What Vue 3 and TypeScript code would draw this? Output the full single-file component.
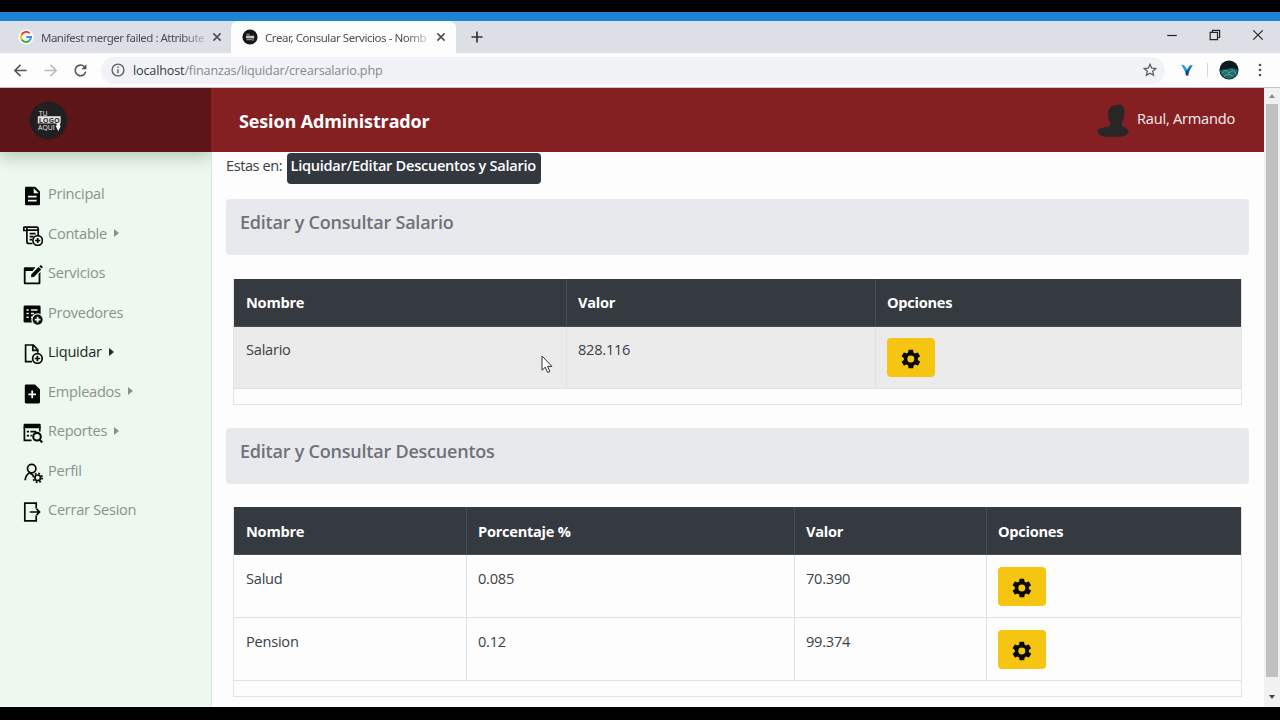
<script setup lang="ts">
interface NavItem {
  label: string
  icon: string
  arrow?: boolean
  active?: boolean
}

interface DataTable {
  title: string
  kind: string
  columns: string[]
  rows: string[][]
  hovered?: boolean
}

const navItems: NavItem[] = [
  { label: 'Principal', icon: 'document' },
  { label: 'Contable', icon: 'scroll', arrow: true },
  { label: 'Servicios', icon: 'edit' },
  { label: 'Provedores', icon: 'list' },
  { label: 'Liquidar', icon: 'fileadd', arrow: true, active: true },
  { label: 'Empleados', icon: 'fileplus', arrow: true },
  { label: 'Reportes', icon: 'report', arrow: true },
  { label: 'Perfil', icon: 'profile' },
  { label: 'Cerrar Sesion', icon: 'exit' },
]

const tables: DataTable[] = [
  {
    title: 'Editar y Consultar Salario',
    kind: 'salary',
    columns: ['Nombre', 'Valor', 'Opciones'],
    rows: [['Salario', '828.116']],
    hovered: true,
  },
  {
    title: 'Editar y Consultar Descuentos',
    kind: 'discounts',
    columns: ['Nombre', 'Porcentaje %', 'Valor', 'Opciones'],
    rows: [
      ['Salud', '0.085', '70.390'],
      ['Pension', '0.12', '99.374'],
    ],
  },
]
</script>

<template>
  <div class="screen">
    <div class="desktop-strip"></div>

    <div class="tabs">
      <div class="tab tab-idle">
        <svg class="favicon" viewBox="0 0 16 16">
          <circle cx="8" cy="8" r="7.6" fill="#fff" />
          <g fill="none" stroke-width="2">
            <path d="M3.6 5.7A5 5 0 0 1 11.7 4.4" stroke="#ea4335" />
            <path d="M3.6 5.7A5 5 0 0 0 3.7 10.5" stroke="#fbbc05" />
            <path d="M3.7 10.5A5 5 0 0 0 11.3 11.7" stroke="#34a853" />
            <path d="M8.2 8H13A5 5 0 0 1 11.3 11.7" stroke="#4285f4" />
          </g>
        </svg>
        <span class="tab-label">Manifest merger failed : Attribute</span>
        <svg class="tab-close" viewBox="0 0 10 10"><path d="M1.4 1.4 8.6 8.6M8.6 1.4 1.4 8.6" /></svg>
      </div>
      <div class="tab tab-current">
        <svg class="favicon" viewBox="0 0 16 16">
          <circle cx="8" cy="8" r="7.6" fill="#151515" />
          <path d="M4.5 5.3h3M4.5 10.6h5.5" stroke="#8a8a8a" stroke-width="1.3" />
          <path d="M4 8h8.2" stroke="#c4c4c4" stroke-width="2.6" />
          <path d="M11 9v3" stroke="#999" stroke-width="1" />
        </svg>
        <span class="tab-label">Crear, Consular Servicios - Nomb</span>
        <svg class="tab-close" viewBox="0 0 10 10"><path d="M1.4 1.4 8.6 8.6M8.6 1.4 1.4 8.6" /></svg>
      </div>
      <svg class="new-tab" viewBox="0 0 12 12"><path d="M6 .5v11M.5 6h11" /></svg>
      <div class="window-buttons">
        <svg viewBox="0 0 12 12"><path d="M1.2 6.5h9.6" /></svg>
        <svg viewBox="0 0 12 12"><path d="M1.2 3.3h7.3v7.3H1.2zM3.4 3.2V1.3h7.2v7.2H8.8" /></svg>
        <svg viewBox="0 0 12 12"><path d="M1.3 1.3l9.4 9.4M10.7 1.3l-9.4 9.4" /></svg>
      </div>
    </div>

    <div class="toolbar">
      <svg class="tool back" viewBox="0 0 16 16"><path d="M14.5 8H2.2M8 2 2 8l6 6" /></svg>
      <svg class="tool forward" viewBox="0 0 16 16"><path d="M1.5 8h12.3M8 2l6 6-6 6" /></svg>
      <svg class="tool reload" viewBox="0 0 16 16">
        <path d="M13.6 9.2A5.7 5.7 0 1 1 12.2 4" />
        <path d="M14.3 1.3v5.4H8.9z" fill="#505357" stroke="none" />
      </svg>
      <div class="address">
        <svg class="info" viewBox="0 0 14 14">
          <circle cx="7" cy="7" r="5.9" />
          <path d="M7 6.2v4M7 3.6v1.5" />
        </svg>
        <span class="url"><span class="host">localhost</span>/finanzas/liquidar/crearsalario.php</span>
        <svg class="star" viewBox="0 0 14 14">
          <path d="M7 1.3l1.7 3.8 4.1.4-3.1 2.7.9 4.1L7 10.2l-3.6 2.1.9-4.1L1.2 5.5l4.1-.4z" />
        </svg>
      </div>
      <svg class="extension" viewBox="0 0 14 14">
        <path d="M1.2 1.8Q4 1.5 5.2 3.5L7 6.3 8.800 3.5Q10 1.5 12.8 2.2L9.200 8.500 8.500 12.500H5.700L5 8.500z" fill="#2a9bdc" />
        <path d="M5.800 7 7 8 11.500 3 8.800 8.300 8 12.500H6.200z" fill="#173f7c" />
      </svg>
      <span class="divider"></span>
      <svg class="avatar" viewBox="0 0 20 20">
        <circle cx="10" cy="10" r="9.6" fill="#0b1c20" />
        <path d="M1 11c4-3 5 0 8-2s5-1 10 1c0 3-2 6-4 7-4 3-9 2-12-2z" fill="#1d6a6c" />
        <path d="M3 13l4-3 3 3 4-3 3 4M5 16l4-2 5 2" fill="none" stroke="#66a8a6" stroke-width=".9" />
      </svg>
      <svg class="dots" viewBox="0 0 4 14">
        <circle cx="2" cy="2" r="1.3" /><circle cx="2" cy="7" r="1.3" /><circle cx="2" cy="12" r="1.3" />
      </svg>
    </div>

    <div class="page">
      <aside class="sidebar">
        <div class="brand">
          <svg class="logo" viewBox="0 0 40 40">
            <circle cx="20" cy="20" r="19.5" fill="#221f20" />
            <rect x="9" y="15.6" width="23.5" height="7.4" fill="#e4e4e4" />
            <text x="10" y="15" class="logo-light" textLength="9" lengthAdjust="spacingAndGlyphs">TU</text>
            <text x="10" y="22.2" class="logo-dark" textLength="21.5" lengthAdjust="spacingAndGlyphs">LOGO</text>
            <text x="9.3" y="30.2" class="logo-light" textLength="17" lengthAdjust="spacingAndGlyphs">AQUI</text>
            <path d="M28.3 22.5h3.4v3h1L30 31l-2.7-5.5h1z" fill="#f3f3f3" />
          </svg>
        </div>
        <nav class="menu">
          <a v-for="item in navItems" :key="item.label" class="menu-item" :class="{ active: item.active }">
            <svg class="menu-icon" viewBox="0 0 20 20">
              <g v-if="item.icon === 'document'">
                <path d="M3 .8h9.2L17 5.6V18a1.3 1.3 0 0 1-1.3 1.3H3.3A1.3 1.3 0 0 1 2 18V2A1.2 1.2 0 0 1 3 .8z" />
                <path d="M10.7 2.3v5h5z" fill="#edf8ee" />
                <path d="M5 10.7h8.6M5 14.7h8.6" stroke="#edf8ee" stroke-width="1.7" />
              </g>
              <g v-else-if="item.icon === 'scroll'">
                <path class="line" d="M3.7 4.5H.8V1.8Q.8 1.1 1.6 1.1H14q1.3.2 1.2 1.8V9M3.9 1.5V15.5q0 2 2 2h3.5M3.8 4.2H15M6.6 7.6h6M6.6 10.7h4M6.6 13.7h2.4" />
                <circle class="line" cx="14.7" cy="14.5" r="4.8" />
                <path class="line" d="M14.7 11.9v5.2M12.1 14.5h5.2" />
              </g>
              <g v-else-if="item.icon === 'edit'">
                <path d="M2 2.3h10.5L9.5 6H2.600v11.500h13V9l1.800-1.900V18a1.200 1.200 0 0 1-1.200 1.200H2A1.200 1.200 0 0 1 .8 18V3.500A1.200 1.200 0 0 1 2 2.300z" />
                <path d="M8.300 9.300 15.600 2l2.600 2.600-7.300 7.300-2.800.4zM16.400 1.300l1-1q.5-.3 1 .2l1.100 1.100q.4.500 0 1l-1 1z" />
              </g>
              <g v-else-if="item.icon === 'list'">
                <rect x=".6" y=".6" width="17" height="17" rx="1.4" />
                <path d="M3.5 5H5.7M3.5 8.6H5.7M3.5 12.2H5.7M8 5h6.5M8 8.6h3M8 12.2h1" stroke="#edf8ee" stroke-width="1.5" />
                <circle cx="14.6" cy="14.6" r="5.7" stroke="#edf8ee" stroke-width="1.3" />
                <path d="M14.6 11.7v5.800M11.700 14.600h5.800" stroke="#edf8ee" stroke-width="1.8" />
              </g>
              <g v-else-if="item.icon === 'fileadd'">
                <path class="line" d="M9 17.7H2.6V1h7.8l4.4 4.9v2.8M9.8 1.4v5h5" />
                <circle class="line" cx="14.4" cy="14.5" r="4.8" />
                <path class="line" d="M14.4 11.8v5.4M11.7 14.5h5.4" />
              </g>
              <g v-else-if="item.icon === 'fileplus'">
                <path d="M3.4.6H12L17 5.4V18a1.4 1.4 0 0 1-1.4 1.4H3.2A1.4 1.4 0 0 1 1.8 18V2A1.4 1.4 0 0 1 3.4.6z" />
                <path d="M9.2 6.6v7.6M5.4 10.4H13" stroke="#edf8ee" stroke-width="1.8" />
              </g>
              <g v-else-if="item.icon === 'report'">
                <path d="M1.5.8h15.2a1 1 0 0 1 1 1V5.2H.6V1.8a1 1 0 0 1 .9-1z" />
                <path class="line" d="M1.4 4v13.4h7.2M16.8 4v4.5M3.8 8.6h2.2M7.4 8.6h5.8M3.8 12.6h2.2M7.4 12.6h1.4" />
                <circle class="line thick" cx="14" cy="13.7" r="3.8" />
                <path class="line thick" d="M16.6 16.6l2.6 2.9" />
              </g>
              <g v-else-if="item.icon === 'profile'">
                <circle class="line" cx="8.7" cy="5.6" r="4.2" />
                <path class="line" d="M2.2 17.3c0-4 1.700-5.600 4.300-7.600l4.200 2.900" />
                <circle class="line" cx="14.7" cy="14.8" r="2.8" />
                <circle class="line" cx="14.7" cy="14.8" r="4.5" stroke-dasharray="1.77 1.77" />
              </g>
              <g v-else>
                <path class="line" d="M13.2 6.5V1.2H1.8v17.6h11.4v-5.2" />
                <path class="line" d="M6.8 10h9.5M13.5 6.9l3 3.1-3 3.1" />
              </g>
            </svg>
            <span class="menu-label">{{ item.label }}</span>
            <span v-if="item.arrow" class="caret"></span>
          </a>
        </nav>
      </aside>

      <main class="main">
        <header class="topbar">
          <h1>Sesion Administrador</h1>
          <div class="user">
            <svg class="user-icon" viewBox="0 0 32 34">
              <path d="M12 5.5C13 2.5 16 .9 19 1.2L24.5.5 26.4 2.5 27 5c.8 2 .6 4 .2 6.5.2 2.7-1.6 4.5-2 6.5l-.4 3.4c1.8 1.8 6.6 2.8 7 6.4-.7 2.5-5 5-9.8 5H9.5C4 32.8.5 29 .2 27c.3-3 5.5-3 10.5-4.5 2.3-.7 3-1.5 2.8-3.5-2-3-2.5-5-2.3-7.5-.4-2.5 0-4 .8-6z" />
            </svg>
            <span>Raul, Armando</span>
          </div>
        </header>

        <div class="content">
          <div class="crumbs">
            <span class="crumb-lead">Estas en:</span>
            <span class="crumb">Liquidar/Editar Descuentos y Salario</span>
          </div>

          <section v-for="table in tables" :key="table.kind" class="block">
            <h2>{{ table.title }}</h2>
            <div class="table-frame" :class="table.kind">
              <div class="row head">
                <div v-for="column in table.columns" :key="column" class="cell">{{ column }}</div>
              </div>
              <div v-for="row in table.rows" :key="row[0]" class="row" :class="{ hovered: table.hovered }">
                <div v-for="value in row" :key="value" class="cell">{{ value }}</div>
                <div class="cell">
                  <button class="gear-button">
                    <svg viewBox="0 0 24 24">
                      <path fill-rule="evenodd" d="M19.4 13a7.5 7.5 0 0 0 0-2l2.2-1.7a.5.5 0 0 0 .1-.6l-2.1-3.6a.5.5 0 0 0-.6-.2l-2.6 1a7.7 7.7 0 0 0-1.7-1l-.4-2.7a.5.5 0 0 0-.5-.4H9.8a.5.5 0 0 0-.5.4l-.4 2.7a8 8 0 0 0-1.7 1l-2.6-1a.5.5 0 0 0-.6.2L1.9 8.7a.5.5 0 0 0 .1.6L4.2 11a8 8 0 0 0 0 2L2 14.7a.5.5 0 0 0-.1.6l2.1 3.6c.1.2.4.3.6.2l2.6-1a7.7 7.7 0 0 0 1.7 1l.4 2.7c0 .2.2.4.5.4H14c.2 0 .4-.2.5-.4l.4-2.7a8 8 0 0 0 1.7-1l2.6 1c.2.1.5 0 .6-.2l2.1-3.6a.5.5 0 0 0-.1-.6zM11.8 15.8a3.8 3.8 0 1 1 0-7.6 3.8 3.8 0 0 1 0 7.6z" />
                    </svg>
                  </button>
                </div>
              </div>
            </div>
          </section>
        </div>
      </main>

      <div class="scrollbar">
        <span class="scroll-arrow up"></span>
        <span class="thumb"></span>
        <span class="scroll-arrow down"></span>
      </div>
    </div>

    <svg class="pointer" viewBox="0 0 12 19">
      <path d="M1 1v14.2l3.3-3 2.3 5.3 2.3-1-2.3-5.1h4.3z" />
    </svg>
  </div>
</template>

<style>
html,
body {
  margin: 0;
  background: #000;
  overflow: hidden;
}
</style>

<style scoped>
* {
  box-sizing: border-box;
}

.screen {
  position: relative;
  display: flex;
  flex-direction: column;
  width: 1280px;
  height: 720px;
  padding: 12px 0 13px;
  background: #000;
  font-family: "Open Sans", "Noto Sans", sans-serif;
  font-size: 14.6px;
  color: #3a3f44;
}

.desktop-strip {
  flex: none;
  height: 9px;
  background: #1c84d2;
}

.tabs {
  flex: none;
  display: flex;
  height: 32px;
  background: #dcdfe5;
}

.tab {
  display: flex;
  align-items: center;
  font-family: "Noto Sans", "Open Sans", sans-serif;
  font-size: 11.5px;
  color: #4b4f54;
}

.tab-idle {
  width: 231px;
  padding-left: 18px;
}

.tab-current {
  width: 225px;
  padding-left: 11px;
  background: #fdfdfe;
  border-radius: 7px 7px 0 0;
}

.favicon {
  flex: none;
  width: 16px;
  height: 16px;
}

.tab-label {
  width: 165px;
  margin-left: 7px;
  white-space: nowrap;
  letter-spacing: -0.51px;
  -webkit-mask-image: linear-gradient(90deg, #000 86%, rgba(0, 0, 0, 0.15) 100%);
  mask-image: linear-gradient(90deg, #000 86%, rgba(0, 0, 0, 0.15) 100%);
}

.tab-current .tab-label {
  letter-spacing: -0.44px;
}

.tab-close {
  flex: none;
  width: 10px;
  height: 10px;
  margin-left: 6px;
  fill: none;
  stroke: #484b4f;
  stroke-width: 1.5;
}

.new-tab {
  width: 12px;
  height: 12px;
  margin: 10px 0 0 15px;
  fill: none;
  stroke: #333;
  stroke-width: 1.7;
}

.window-buttons {
  display: flex;
  gap: 31px;
  margin: 8px 16px 0 auto;
}

.window-buttons svg {
  width: 12px;
  height: 12px;
  fill: none;
  stroke: #222;
  stroke-width: 1.2;
}

.toolbar {
  flex: none;
  display: flex;
  align-items: center;
  height: 35px;
  padding: 0 18px 0 13px;
  background: #fdfdfe;
  border-bottom: 1px solid #c9c3c6;
}

.tool {
  width: 15px;
  height: 15px;
  fill: none;
  stroke: #505357;
  stroke-width: 1.7;
}

.forward {
  margin-left: 15px;
  stroke: #b9bcc0;
}

.reload {
  margin-left: 15px;
}

.address {
  display: flex;
  align-items: center;
  width: 1064px;
  height: 27px;
  margin-left: 13px;
  padding: 0 8px 0 10px;
  background: #f0f2f5;
  border-radius: 14px;
}

.info {
  width: 14px;
  height: 14px;
  fill: none;
  stroke: #5c6065;
  stroke-width: 1.4;
}

.url {
  margin: 0 auto 0 8px;
  font-size: 12.6px;
  letter-spacing: -0.15px;
  color: #85898d;
}

.host {
  color: #35393d;
}

.star {
  width: 14px;
  height: 14px;
  fill: none;
  stroke: #55585c;
  stroke-width: 1.2;
}

.extension {
  width: 14px;
  height: 14px;
  margin-left: 15px;
}

.divider {
  width: 1px;
  height: 14px;
  margin-left: 13px;
  background: #d5d7da;
}

.avatar {
  width: 20px;
  height: 20px;
  margin-left: 11px;
}

.dots {
  width: 4px;
  height: 14px;
  margin-left: auto;
  fill: #505357;
}

.page {
  flex: 1;
  display: flex;
  min-height: 0;
  background: #fdfdfd;
}

.sidebar {
  width: 212px;
  background: #edf8ee;
  border-right: 1px solid #dde4de;
}

.brand {
  position: relative;
  display: flex;
  align-items: center;
  height: 64px;
  width: 211px;
  padding-left: 29px;
  background: #5e1517;
  box-shadow: 0 6px 14px rgba(40, 70, 50, 0.25);
  clip-path: inset(0 0 -30px 0);
}

.logo {
  width: 39px;
  height: 39px;
}

.logo text {
  font-family: "Open Sans", sans-serif;
}

.logo-light {
  font-size: 7.6px;
  fill: #eee;
}

.logo-dark {
  font-size: 7.8px;
  font-weight: 700;
  fill: #393637;
}

.menu {
  display: flex;
  flex-direction: column;
  padding: 22px 0 0 23px;
}

.menu-item {
  display: flex;
  align-items: center;
  height: 39.5px;
  color: #8b928c;
  line-height: 20px;
}

.menu-item.active {
  color: #222823;
}

.menu-icon {
  width: 20px;
  height: 20px;
  margin-top: 5px;
  fill: #050505;
}

.menu-icon .line {
  fill: none;
  stroke: #080808;
  stroke-width: 1.7;
}

.menu-icon .thick {
  stroke-width: 2.1;
}

.menu-label {
  margin: -1px 0 0 5px;
  letter-spacing: -0.27px;
}

.caret {
  margin-left: 7px;
  border: 4px solid transparent;
  border-left: 5px solid currentColor;
  border-right: 0;
}

.main {
  width: 1052px;
}

.topbar {
  display: flex;
  align-items: center;
  justify-content: space-between;
  height: 64px;
  margin-left: -1px;
  padding: 0 29px 0 28px;
  background: #852022;
  color: #fff;
}

h1 {
  margin: 1px 0 0;
  font-size: 18px;
  font-weight: 700;
  letter-spacing: -0.14px;
}

.user {
  display: flex;
  align-items: center;
  gap: 8px;
  color: #f4eeee;
}

.user span {
  margin-top: -4px;
  letter-spacing: -0.22px;
}

.user-icon {
  width: 32px;
  height: 34px;
  margin-top: 1px;
  fill: #282627;
}

.content {
  padding: 1px 15px 0 14px;
}

.crumbs {
  display: flex;
  height: 31px;
  line-height: 25px;
  white-space: nowrap;
}

.crumb-lead {
  width: 60.5px;
  letter-spacing: -0.45px;
}

.crumb {
  width: 254px;
  padding-left: 4px;
  background: #33373f;
  border-radius: 4px;
  color: #fff;
  font-weight: 600;
  letter-spacing: -0.28px;
}

.block {
  margin-top: 15px;
}

.block + .block {
  margin-top: 23px;
}

h2 {
  height: 56px;
  margin: 0 0 24px;
  padding-left: 14px;
  background: #e8e9ed;
  border-radius: 4px;
  color: #6d7278;
  font-size: 18px;
  font-weight: 600;
  line-height: 46px;
  letter-spacing: -0.22px;
}

.block + .block h2 {
  margin-bottom: 23px;
}

.table-frame {
  margin: 0 7px;
  padding: 0 1px 15px 1px;
  border-bottom: 1px solid #e2e4e6;
  box-shadow: inset 1px 0 #e2e4e6, inset -1px 0 #e2e4e6;
}

.row {
  display: grid;
  height: 62px;
  border-bottom: 1px solid #dfe2e5;
  color: #3c4045;
}

.salary .row {
  grid-template-columns: 332px 309px 1fr;
}

.discounts .row {
  height: 63px;
  grid-template-columns: 232px 328px 192px 1fr;
}

.table-frame .row.head {
  height: 48px;
  background: #343a40;
  border-bottom-color: #454d55;
  color: #fff;
  font-weight: 700;
}

.row.hovered {
  background: #ebebeb;
}

.cell {
  padding: 12px 0 0 12px;
  line-height: 20px;
  letter-spacing: -0.24px;
}

.discounts .cell {
  padding-top: 13px;
}

.cell + .cell {
  padding-left: 11px;
  border-left: 1px solid #dfe2e5;
}

.head .cell {
  padding-top: 13px;
  letter-spacing: -0.26px;
}

.discounts .head .cell {
  padding-top: 14px;
}

.head .cell + .cell {
  border-left-color: #454d55;
}

.gear-button {
  display: flex;
  align-items: center;
  justify-content: center;
  width: 48px;
  height: 39px;
  margin-top: -1px;
  padding: 2px 0 0;
  background: #f6c511;
  border: 0;
  border-radius: 4px;
}

.gear-button svg {
  width: 22px;
  height: 22px;
  fill: #080808;
}

.scrollbar {
  display: flex;
  flex-direction: column;
  align-items: center;
  width: 16px;
  background: #f1f1f1;
}

.scroll-arrow {
  width: 0;
  height: 0;
  border: 3.5px solid transparent;
}

.up {
  margin-top: 3px;
  border-bottom: 4px solid #8b8b8b;
}

.thumb {
  width: 12px;
  height: 573px;
  margin: 6px 0 18px;
  background: #c1c1c1;
}

.down {
  border-top: 4px solid #444;
}

.pointer {
  position: absolute;
  left: 541px;
  top: 355px;
  width: 12px;
  height: 19px;
  fill: #fff;
  stroke: #333;
  stroke-width: 1;
}
</style>
